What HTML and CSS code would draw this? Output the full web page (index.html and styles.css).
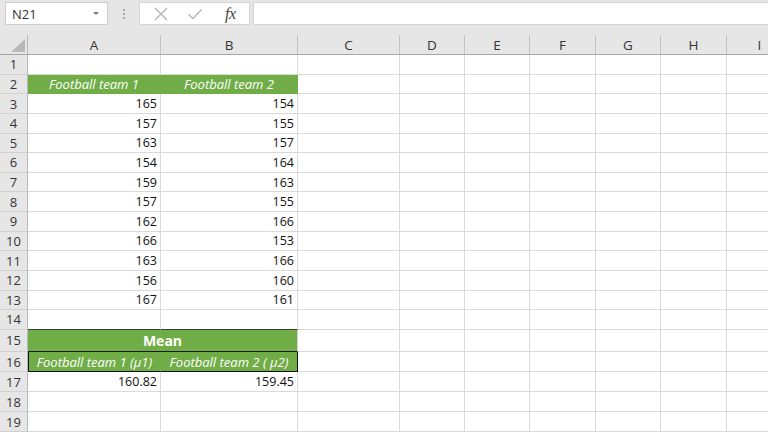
FILE: index.html
```html
<!DOCTYPE html>
<html>
<head>
<meta charset="utf-8">
<link rel="stylesheet" href="styles.css">
</head>
<body>
<div class="app">
  <div class="toolbar">
    <div class="namebox"><span>N21</span><span class="caret"></span></div>
    <div class="dots"><i></i><i></i><i></i></div>
    <div class="fbtns">
      <svg class="ico" width="16" height="16" viewBox="0 0 16 16"><path d="M2 2L14 14M14 2L2 14" stroke="#b4b4b4" stroke-width="1.3" fill="none"/></svg>
      <svg class="ico" width="16" height="16" viewBox="0 0 16 16"><path d="M1.5 8.5L6 12.5L14.5 3.5" stroke="#b4b4b4" stroke-width="1.4" fill="none"/></svg>
      <span class="fx">fx</span>
    </div>
    <div class="finput"></div>
  </div>

  <div class="row hdr">
    <div class="rh corner"><svg width="14" height="13" viewBox="0 0 14 13"><polygon points="14,0 14,13 0,13" fill="#b9b9b9"/></svg></div>
    <div class="ch">A</div><div class="ch">B</div><div class="ch">C</div><div class="ch">D</div><div class="ch">E</div><div class="ch">F</div><div class="ch">G</div><div class="ch">H</div><div class="ch">I</div>
  </div>

  <div class="row r"><div class="rh">1</div><div class="c"></div><div class="c"></div><div class="c"></div><div class="c"></div><div class="c"></div><div class="c"></div><div class="c"></div><div class="c"></div><div class="c"></div></div>
  <div class="row r"><div class="rh">2</div><div class="c g">Football team 1</div><div class="c g">Football team 2</div><div class="c"></div><div class="c"></div><div class="c"></div><div class="c"></div><div class="c"></div><div class="c"></div><div class="c"></div></div>
  <div class="row r"><div class="rh">3</div><div class="c n">165</div><div class="c n">154</div><div class="c"></div><div class="c"></div><div class="c"></div><div class="c"></div><div class="c"></div><div class="c"></div><div class="c"></div></div>
  <div class="row r"><div class="rh">4</div><div class="c n">157</div><div class="c n">155</div><div class="c"></div><div class="c"></div><div class="c"></div><div class="c"></div><div class="c"></div><div class="c"></div><div class="c"></div></div>
  <div class="row r"><div class="rh">5</div><div class="c n">163</div><div class="c n">157</div><div class="c"></div><div class="c"></div><div class="c"></div><div class="c"></div><div class="c"></div><div class="c"></div><div class="c"></div></div>
  <div class="row r"><div class="rh">6</div><div class="c n">154</div><div class="c n">164</div><div class="c"></div><div class="c"></div><div class="c"></div><div class="c"></div><div class="c"></div><div class="c"></div><div class="c"></div></div>
  <div class="row r"><div class="rh">7</div><div class="c n">159</div><div class="c n">163</div><div class="c"></div><div class="c"></div><div class="c"></div><div class="c"></div><div class="c"></div><div class="c"></div><div class="c"></div></div>
  <div class="row r"><div class="rh">8</div><div class="c n">157</div><div class="c n">155</div><div class="c"></div><div class="c"></div><div class="c"></div><div class="c"></div><div class="c"></div><div class="c"></div><div class="c"></div></div>
  <div class="row r"><div class="rh">9</div><div class="c n">162</div><div class="c n">166</div><div class="c"></div><div class="c"></div><div class="c"></div><div class="c"></div><div class="c"></div><div class="c"></div><div class="c"></div></div>
  <div class="row r"><div class="rh">10</div><div class="c n">166</div><div class="c n">153</div><div class="c"></div><div class="c"></div><div class="c"></div><div class="c"></div><div class="c"></div><div class="c"></div><div class="c"></div></div>
  <div class="row r"><div class="rh">11</div><div class="c n">163</div><div class="c n">166</div><div class="c"></div><div class="c"></div><div class="c"></div><div class="c"></div><div class="c"></div><div class="c"></div><div class="c"></div></div>
  <div class="row r"><div class="rh">12</div><div class="c n">156</div><div class="c n">160</div><div class="c"></div><div class="c"></div><div class="c"></div><div class="c"></div><div class="c"></div><div class="c"></div><div class="c"></div></div>
  <div class="row r"><div class="rh">13</div><div class="c n">167</div><div class="c n">161</div><div class="c"></div><div class="c"></div><div class="c"></div><div class="c"></div><div class="c"></div><div class="c"></div><div class="c"></div></div>
  <div class="row r"><div class="rh">14</div><div class="c dk"></div><div class="c dk"></div><div class="c"></div><div class="c"></div><div class="c"></div><div class="c"></div><div class="c"></div><div class="c"></div><div class="c"></div></div>
  <div class="row r15"><div class="rh">15</div><div class="c mean">Mean</div><div class="c"></div><div class="c"></div><div class="c"></div><div class="c"></div><div class="c"></div><div class="c"></div><div class="c"></div></div>
  <div class="row r16"><div class="rh">16</div><div class="c g box-l">Football team 1 (µ1)</div><div class="c g box-r">Football team 2 ( µ2)</div><div class="c"></div><div class="c"></div><div class="c"></div><div class="c"></div><div class="c"></div><div class="c"></div><div class="c"></div></div>
  <div class="row r20"><div class="rh">17</div><div class="c n">160.82</div><div class="c n">159.45</div><div class="c"></div><div class="c"></div><div class="c"></div><div class="c"></div><div class="c"></div><div class="c"></div><div class="c"></div></div>
  <div class="row r20"><div class="rh">18</div><div class="c"></div><div class="c"></div><div class="c"></div><div class="c"></div><div class="c"></div><div class="c"></div><div class="c"></div><div class="c"></div><div class="c"></div></div>
  <div class="row r20"><div class="rh">19</div><div class="c"></div><div class="c"></div><div class="c"></div><div class="c"></div><div class="c"></div><div class="c"></div><div class="c"></div><div class="c"></div><div class="c"></div></div>
</div>
</body>
</html>
```

FILE: styles.css
```css
* { box-sizing: border-box; }
html, body { margin: 0; padding: 0; }
body {
  font-family: "Open Sans", "Liberation Sans", sans-serif;
  font-size: 13px;
  color: #000;
  background: #fff;
}
.app {
  width: 768px;
  height: 434px;
  overflow: hidden;
  background: #fff;
}
.toolbar {
  height: 35px;
  background: #e6e6e6;
  display: flex;
  align-items: flex-start;
  padding: 2px 0 0 5px;
}
.namebox {
  width: 103px;
  height: 23px;
  background: #fff;
  border: 1px solid #cdcdcd;
  display: flex;
  align-items: center;
  justify-content: space-between;
  padding: 0 8px 0 6px;
  color: #333;
  font-size: 13px;
}
.caret {
  width: 0; height: 0;
  border-left: 3px solid transparent;
  border-right: 3px solid transparent;
  border-top: 3px solid #7a7a7a;
}
.dots {
  width: 31px;
  height: 23px;
  display: flex;
  flex-direction: column;
  align-items: center;
  justify-content: center;
  gap: 2px;
}
.dots i {
  display: block;
  width: 2px;
  height: 2px;
  background: #a9a9a9;
}
.fbtns {
  width: 111px;
  height: 23px;
  background: #fff;
  border: 1px solid #d6d6d6;
  display: flex;
  align-items: center;
  padding-left: 13px;
  gap: 18px;
}
.fbtns .ico { display: block; }
.fx {
  font-family: "Liberation Serif", serif;
  font-style: italic;
  font-size: 16px;
  color: #444;
  margin-left: 4px;
  letter-spacing: -0.5px;
}
.finput {
  flex: 1;
  margin-left: 3px;
  height: 23px;
  background: #fff;
  border: 1px solid #d6d6d6;
  border-right: none;
}

.row {
  display: grid;
  grid-template-columns: 28px 133px 137px 102px 65px 65px 66px 65px 66px 66px;
}
.hdr { height: 20px; background: #e6e6e6; border-bottom: 1px solid #a6a6a6; }
.r { height: 19.64px; }
.r15 { height: 22px; grid-template-columns: 28px 270px 102px 65px 65px 66px 65px 66px 66px; }
.r16 { height: 20.5px; }
.r20 { height: 20px; }

.rh {
  background: #e6e6e6;
  border-right: 1px solid #b9b9b9;
  border-bottom: 1px solid #d0d0d0;
  display: flex;
  align-items: center;
  justify-content: center;
  color: #333;
  font-size: 13px;
}
.hdr .rh { border-bottom: none; }
.corner { align-items: flex-end; justify-content: flex-end; padding: 0 2px 2px 0; }
.corner svg { display: block; }
.ch {
  border-right: 1px solid #c2c2c2;
  display: flex;
  align-items: center;
  justify-content: center;
  color: #333;
  font-size: 13.5px;
}
.c {
  border-right: 1px solid #dadada;
  border-bottom: 1px solid #dadada;
  display: flex;
  align-items: center;
  white-space: nowrap;
  padding: 0 3px;
}
.n { justify-content: flex-end; color: #111; font-size: 12.5px; }
.g {
  background: #70ad47;
  border-color: #70ad47;
  color: #fff;
  font-style: italic;
  justify-content: center;
  padding: 0;
  font-size: 13px;
}
.dk { border-bottom-color: #3c3c3c; }
.mean {
  background: #70ad47;
  color: #fff;
  font-weight: bold;
  font-size: 14px;
  justify-content: center;
  border-bottom-color: #1a1a1a;
  border-right-color: #d0d0d0;
}
.box-l { border-left: 1px solid #111; border-bottom-color: #111; }
.box-r { border-right-color: #111; border-bottom-color: #111; }
```
